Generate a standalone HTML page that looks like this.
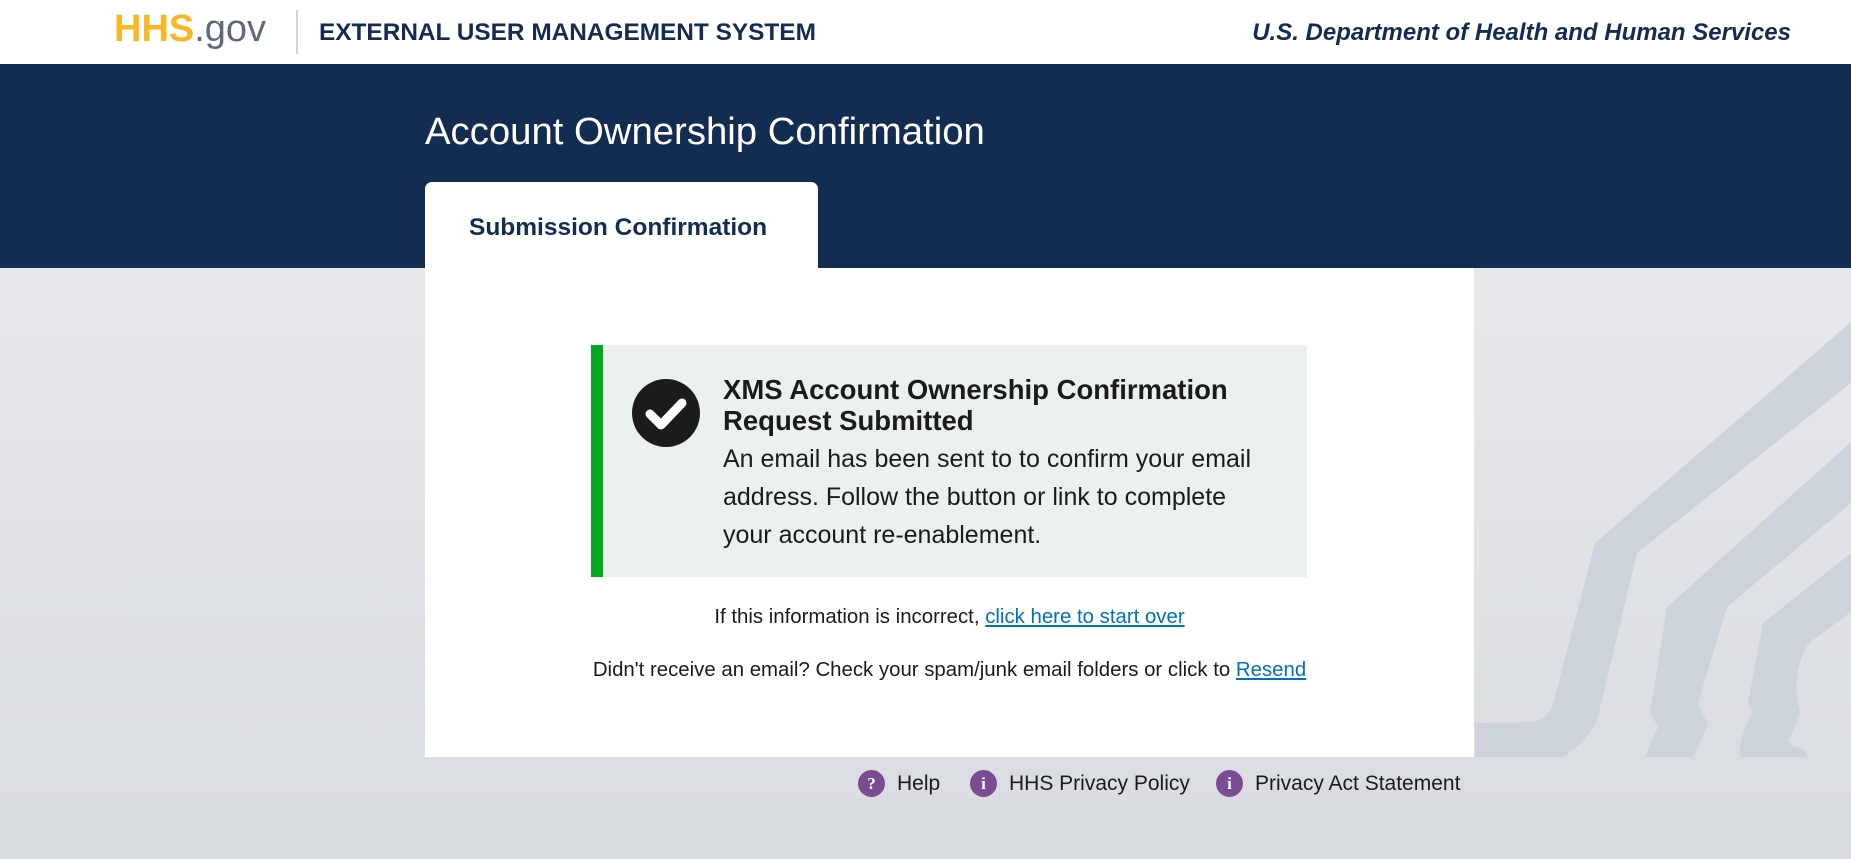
<!DOCTYPE html>
<html><head><meta charset="utf-8"><style>
*{margin:0;padding:0;box-sizing:border-box}
body{width:1851px;height:859px;overflow:hidden;font-family:"Liberation Sans",Arial,sans-serif;background:linear-gradient(#eeeff1,#d8dbe0);position:relative}
.hdr{position:absolute;left:0;top:0;width:1851px;height:64px;background:#fff}
.logo{position:absolute;left:114px;top:8px;font-size:38px;letter-spacing:0px}
.logo b{color:#fbb826;font-weight:bold}
.logo span{color:#5e6a78}
.div{position:absolute;left:296px;top:10px;width:2px;height:44px;background:#d6d6d6}
.sys{position:absolute;left:319px;top:19px;font-size:24.4px;font-weight:bold;color:#132d52}
.dept{position:absolute;right:60px;top:19px;font-size:24px;font-weight:bold;font-style:italic;color:#132d52}
.nav{position:absolute;left:0;top:64px;width:1851px;height:204px;background:#132d52}
.title{position:absolute;left:425px;top:110px;font-size:38.3px;color:#fff}
.tab{position:absolute;left:425px;top:182px;width:393px;height:87px;background:#fff;border-radius:7px 7px 0 0}
.tab div{position:absolute;left:44px;top:32px;font-size:24.5px;font-weight:bold;color:#132d52}
.card{position:absolute;left:425px;top:268px;width:1049px;height:489px;background:#fff}
.alert{position:absolute;left:166px;top:77px;width:716px;height:232px;background:#ebf1ec;border-left:12px solid #02a920}
.chk{position:absolute;left:29px;top:34px}
.h{position:absolute;left:120px;top:29px;font-size:27.5px;font-weight:bold;color:#1b1b1b;line-height:31px}
.p{position:absolute;left:120px;top:95px;font-size:25px;color:#1b1b1b;line-height:38px;width:548px}
.l1,.l2{position:absolute;left:0;width:1049px;text-align:center;font-size:20.4px;color:#1b1b1b}
.l1{top:338px}.l2{top:391px}
a{color:#0071bc;text-decoration:underline}
.ft{position:absolute;top:770px;font-size:21px;color:#1b1b1b;display:flex;align-items:center}
.ic{width:27px;height:27px;border-radius:50%;background:#7a4d93;color:#fff;font-weight:bold;font-size:17px;display:inline-flex;align-items:center;justify-content:center;margin-right:12px;font-family:"Liberation Serif",serif}
</style></head><body>
<svg style="position:absolute;left:0;top:0" width="1851" height="859">
<g fill="#cdd3da">
<path d="M1851 322 L1595 543 L1553 705 Q1545 722 1530 722 L1475 723 L1475 757 L1563 757 Q1590 740 1598 717 L1637 553 L1851 383Z"/>
<path d="M1851 442 L1667 607 L1650 712 L1658 727 L1645 757 L1693 757 L1708 725 L1698 703 L1727 607 L1851 503Z"/>
<path d="M1851 553 L1763 623 L1748 703 L1752 713 Q1738 740 1740 757 L1806 757 Q1808 748 1795 747 Q1785 742 1790 738 L1800 713 Q1795 687 1797 680 Q1800 650 1813 640 L1851 612Z"/>
</g></svg>
<div class="hdr"><div class="logo"><b>HHS</b><span>.gov</span></div><div class="div"></div>
<div class="sys">EXTERNAL USER MANAGEMENT SYSTEM</div>
<div class="dept">U.S. Department of Health and Human Services</div></div>
<div class="nav"></div>
<div class="title">Account Ownership Confirmation</div>
<div class="tab"><div>Submission Confirmation</div></div>
<div class="card">
<div class="alert">
<svg class="chk" width="68" height="68" viewBox="0 0 68 68"><circle cx="34" cy="34" r="34" fill="#1b1b1b"/><path d="M18 35 L29 46 L50 24" stroke="#fff" stroke-width="9" fill="none" stroke-linecap="round" stroke-linejoin="round"/></svg>
<div class="h">XMS Account Ownership Confirmation<br>Request Submitted</div>
<div class="p">An email has been sent to to confirm your email address. Follow the button or link to complete your account re-enablement.</div>
</div>
<div class="l1">If this information is incorrect, <a>click here to start over</a></div>
<div class="l2">Didn't receive an email? Check your spam/junk email folders or click to <a>Resend</a></div>
</div>
<div class="ft" style="left:858px"><span class="ic">?</span>Help</div>
<div class="ft" style="left:970px"><span class="ic">i</span>HHS Privacy Policy</div>
<div class="ft" style="left:1216px"><span class="ic">i</span>Privacy Act Statement</div>
</body></html>
